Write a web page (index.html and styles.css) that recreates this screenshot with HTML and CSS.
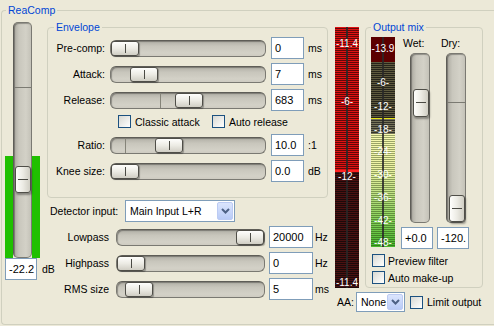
FILE: index.html
```html
<!DOCTYPE html>
<html>
<head>
<meta charset="utf-8">
<title>ReaComp</title>
<link rel="stylesheet" href="styles.css">
</head>
<body>
<div class="group outer">
  <div class="gtitle">ReaComp</div>
  <div class="outer-body">
    <div class="col-thresh">
      <div class="thresh">
        <div class="green"></div>
        <div class="vtrack thresh-track">
          <span class="vtick" style="top:64px"></span>
          <span class="vthumb thresh-thumb" style="top:143px"></span>
        </div>
        <div class="green"></div>
      </div>
      <div class="valrow">
        <div class="tbox thresh-box">-22.2</div>
        <span class="unit thresh-unit">dB</span>
      </div>
    </div>

    <div class="col-main">
      <div class="group env">
        <div class="gtitle">Envelope</div>
        <div class="env-body">
          <div class="erow">
            <span class="lbl">Pre-comp:</span>
            <div class="htrack etrack"><span class="hthumb" style="left:0px"></span></div>
            <div class="tbox ebox">0</div>
            <span class="unit">ms</span>
          </div>
          <div class="erow">
            <span class="lbl">Attack:</span>
            <div class="htrack etrack"><span class="hthumb" style="left:19px"></span></div>
            <div class="tbox ebox">7</div>
            <span class="unit">ms</span>
          </div>
          <div class="erow">
            <span class="lbl">Release:</span>
            <div class="htrack etrack"><span class="htick" style="left:49px"></span><span class="hthumb" style="left:64px"></span></div>
            <div class="tbox ebox">683</div>
            <span class="unit">ms</span>
          </div>
          <div class="cbline">
            <div class="cbitem cbfirst"><span class="cb"></span><span class="cblbl">Classic attack</span></div>
            <div class="cbitem"><span class="cb"></span><span class="cblbl">Auto release</span></div>
          </div>
          <div class="erow">
            <span class="lbl">Ratio:</span>
            <div class="htrack etrack"><span class="htick" style="left:14px"></span><span class="hthumb" style="left:44px"></span></div>
            <div class="tbox ebox">10.0</div>
            <span class="unit">:1</span>
          </div>
          <div class="erow">
            <span class="lbl">Knee size:</span>
            <div class="htrack etrack"><span class="hthumb" style="left:0px"></span></div>
            <div class="tbox ebox">0.0</div>
            <span class="unit">dB</span>
          </div>
        </div>
      </div>

      <div class="det-row">
        <span class="det-lbl">Detector input:</span>
        <div class="combo det-combo">
          <span class="ctext">Main Input L+R</span>
          <span class="cbtn"><svg width="9" height="6" viewBox="0 0 9 6"><path d="M1 1 L4.5 4.5 L8 1" fill="none" stroke="#4d6185" stroke-width="2"/></svg></span>
        </div>
      </div>

      <div class="frow">
        <span class="flbl">Lowpass</span>
        <div class="htrack ftrack"><span class="hthumb" style="left:119px"></span></div>
        <div class="tbox fbox">20000</div>
        <span class="funit">Hz</span>
      </div>
      <div class="frow">
        <span class="flbl">Highpass</span>
        <div class="htrack ftrack"><span class="hthumb" style="left:0px"></span></div>
        <div class="tbox fbox">0</div>
        <span class="funit">Hz</span>
      </div>
      <div class="frow">
        <span class="flbl">RMS size</span>
        <div class="htrack ftrack"><span class="hthumb" style="left:8px"></span></div>
        <div class="tbox fbox">5</div>
        <span class="funit">ms</span>
      </div>
    </div>

    <div class="col-right">
      <div class="right-top">
        <div class="meter meter-in">
          <div class="mi-hot"></div>
          <div class="mi-line"></div>
          <div class="mi-cold"></div>
          <span class="mlabel" style="top:12px">-11.4</span>
          <span class="mlabel" style="top:70px">-6-</span>
          <span class="mlabel" style="top:145px">-12-</span>
          <span class="mlabel" style="top:251px">-11.4</span>
        </div>

        <div class="group outmix">
          <div class="gtitle">Output mix</div>
          <div class="om-body">
            <div class="om-top">
              <div class="meter meter-out">
                <div class="mo-peak"></div>
                <div class="mo-a"></div>
                <div class="mo-yl"></div>
                <div class="mo-b"></div>
                <div class="mo-c"></div>
                <span class="mlabel" style="top:7px">-13.9</span>
                <span class="mlabel" style="top:41px">-6-</span>
                <span class="mlabel" style="top:65px">-12-</span>
                <span class="mlabel" style="top:88px">-18-</span>
                <span class="mlabel" style="top:110px">-24-</span>
                <span class="mlabel" style="top:133px">-30-</span>
                <span class="mlabel" style="top:156px">-36-</span>
                <span class="mlabel" style="top:179px">-42-</span>
                <span class="mlabel" style="top:201px">-48-</span>
              </div>
              <div class="mixcol wet">
                <div class="mixlbl">Wet:</div>
                <div class="vtrack mixtrack"><span class="vthumb mixthumb" style="top:35px;height:28px"></span></div>
                <div class="tbox mixbox">+0.0</div>
              </div>
              <div class="mixcol dry">
                <div class="mixlbl">Dry:</div>
                <div class="vtrack mixtrack"><span class="vtick" style="top:48px"></span><span class="vthumb mixthumb" style="top:141px"></span></div>
                <div class="tbox mixbox">-120.</div>
              </div>
            </div>
            <div class="cbrow"><span class="cb"></span><span class="cblbl">Preview filter</span></div>
            <div class="cbrow"><span class="cb"></span><span class="cblbl">Auto make-up</span></div>
          </div>
        </div>
      </div>

      <div class="aa-row">
        <span class="aalbl">AA:</span>
        <div class="combo aa-combo">
          <span class="ctext">None</span>
          <span class="cbtn"><svg width="9" height="6" viewBox="0 0 9 6"><path d="M1 1 L4.5 4.5 L8 1" fill="none" stroke="#4d6185" stroke-width="2"/></svg></span>
        </div>
        <span class="cb limcb"></span><span class="cblbl">Limit output</span>
      </div>
    </div>
  </div>
</div>
</body>
</html>
```

FILE: styles.css
```css
* { box-sizing: border-box; }
html, body { margin: 0; padding: 0; }
body {
  width: 494px;
  height: 326px;
  overflow: hidden;
  background: #ece9d8;
  font-family: "Liberation Sans", Arial, sans-serif;
  font-size: 10.5px;
  color: #000;
}

/* group boxes */
.group { border: 1px solid #d0d0bf; border-radius: 4px; }
.gtitle {
  width: fit-content;
  height: 13px;
  line-height: 13px;
  padding: 0 2px;
  margin: -7px 0 -6px 0;
  background: #ece9d8;
  color: #0046d5;
  white-space: nowrap;
  position: relative;
}
.outer {
  margin: 10px 0 0 1px;
  width: 493px;
  height: 315px;
  border-right: 0;
  border-top-right-radius: 0;
  border-bottom-right-radius: 0;
}
.outer > .gtitle { margin-left: 4px; }
.outer-body { display: flex; align-items: flex-start; padding: 11px 0 0 3px; }

/* text boxes */
.tbox {
  height: 22px;
  border: 1px solid #7f9db9;
  background: #fff;
  font-size: 11px;
  line-height: 14px;
  padding: 3px 3px 0 3px;
  white-space: nowrap;
  overflow: hidden;
  flex: none;
}
.unit { margin-left: 4px; white-space: nowrap; }

/* horizontal sliders */
.htrack {
  position: relative;
  flex: none;
  height: 17px;
  border: 1px solid #7a7972;
  border-top-color: #5e5d57;
  border-radius: 6px;
  background: linear-gradient(#b0aea5, #c8c6bc 35%, #d3d1c7 80%, #cecbc1);
  box-shadow: inset 1px 1px 1px rgba(0,0,0,.3);
}
.hthumb {
  position: absolute;
  top: 0;
  width: 28px;
  height: 15px;
  border: 1px solid #4f4e48;
  border-radius: 3px;
  background: linear-gradient(#fefefc, #ecebe4 50%, #d0cec4);
  box-shadow: 1px 1px 1px rgba(0,0,0,.3);
}
.hthumb::after {
  content: "";
  position: absolute;
  left: 13px;
  top: 2px;
  bottom: 2px;
  width: 1px;
  background: #4a4a44;
}
.htick { position: absolute; top: 0; bottom: 0; width: 1px; background: #858479; }

/* vertical sliders */
.vtrack {
  position: relative;
  flex: none;
  border: 1px solid #7a7972;
  border-left-color: #5e5d57;
  border-radius: 5px;
  background: linear-gradient(to right, #aba9a0, #c9c7bd 30%, #d3d1c7 70%, #c4c2b8);
  box-shadow: inset 1px 1px 1px rgba(0,0,0,.3);
}
.vthumb {
  position: absolute;
  width: 16px;
  height: 27px;
  border: 1px solid #4f4e48;
  border-radius: 3px;
  background: linear-gradient(to right, #fefefc, #ecebe4 50%, #d0cec4);
  box-shadow: 1px 2px 2px rgba(0,0,0,.35);
}
.vthumb::after {
  content: "";
  position: absolute;
  left: 2px;
  right: 2px;
  top: 12px;
  height: 1px;
  background: #4a4a44;
}
.vtick { position: absolute; left: 0; right: 0; height: 1px; background: #7b7a72; }

/* threshold column */
.col-thresh { width: 42px; flex: none; display: flex; flex-direction: column; }
.thresh { display: flex; align-items: flex-end; height: 236px; }
.green { width: 8px; height: 102px; background: #20c000; }
.thresh-track { width: 19px; height: 236px; }
.thresh-thumb { left: 1px; }
.valrow { display: flex; align-items: center; height: 22px; }
.thresh-box { width: 32px; }
.thresh-unit { margin-left: 5px; }

/* main column */
.col-main { width: 281px; flex: none; margin-top: 5px; }
.env { height: 171px; }
.env > .gtitle { margin-left: 6px; }
.env-body { padding-top: 9px; }
.erow { display: flex; align-items: center; height: 22px; margin-bottom: 4px; }
.lbl { width: 57px; text-align: right; margin-right: 5px; white-space: nowrap; flex: none; }
.etrack { width: 156px; margin-right: 5px; }
.ebox { width: 33px; }
.cbline { display: flex; align-items: center; height: 13px; margin: 2px 0 6px 0; padding-left: 70px; }
.cbitem { display: flex; align-items: center; }
.cbfirst { width: 94px; }
.cb {
  display: inline-block;
  width: 13px;
  height: 13px;
  flex: none;
  border: 1px solid #1c5180;
  background: linear-gradient(135deg, #d8d8d2, #f4f4f2 70%, #fff);
}
.cblbl { margin-left: 4px; white-space: nowrap; }

.det-row { display: flex; align-items: center; height: 22px; margin-top: 2px; padding-left: 3px; }
.det-lbl { width: 75px; white-space: nowrap; flex: none; }
.combo {
  display: flex;
  align-items: stretch;
  border: 1px solid #7f9db9;
  background: #fff;
  padding: 1px;
  flex: none;
}
.ctext { flex: 1; padding-left: 3px; display: flex; align-items: center; white-space: nowrap; }
.cbtn {
  width: 16px;
  flex: none;
  display: flex;
  align-items: center;
  justify-content: center;
  border: 1px solid #bccbf3;
  border-radius: 2px;
  background: linear-gradient(#dbe5fd, #b9cbf7);
}
.det-combo { width: 110px; height: 22px; }

.frow { display: flex; align-items: center; height: 22px; margin-top: 4px; }
.flbl { width: 62px; text-align: right; margin-right: 7px; white-space: nowrap; flex: none; }
.ftrack { width: 149px; margin-right: 4px; }
.fbox { width: 44px; }
.funit { margin-left: 2px; white-space: nowrap; }

/* right column */
.col-right { margin-left: 7px; margin-top: 5px; flex: none; }
.right-top { display: flex; align-items: flex-start; }

.meter { position: relative; display: flex; flex-direction: column; flex: none; overflow: hidden; }
.meter::before {
  content: "";
  position: absolute;
  left: 11px;
  top: 0;
  bottom: 0;
  width: 2px;
  background: rgba(40,40,40,.85);
}
.mlabel {
  position: absolute;
  left: 0;
  right: 0;
  text-align: center;
  color: #fff;
  font-size: 10px;
  line-height: 10px;
  white-space: nowrap;
}
.meter-in { width: 24px; height: 261px; }
.mi-hot { height: 143px; background: repeating-linear-gradient(to bottom, #e01212 0 1px, #620808 1px 2px); }
.mi-line { height: 2px; background: #ff2020; }
.mi-cold { flex: 1; background: repeating-linear-gradient(to bottom, #4a1111 0 1px, #1c0a0a 1px 2px); }

.outmix { width: 118px; height: 261px; margin-left: 6px; flex: none; }
.outmix > .gtitle { margin-left: 5px; }
.om-body { padding: 9px 0 0 5px; }
.om-top { display: flex; align-items: flex-start; }
.meter-out { width: 24px; height: 210px; }
.mo-peak { height: 25px; background: #5c0000; }
.mo-a { height: 56px; background: repeating-linear-gradient(to bottom, #5e5a3e 0 1px, #26241b 1px 2px); }
.mo-yl { height: 1px; background: #e6e418; }
.mo-b { height: 15px; background: repeating-linear-gradient(to bottom, #76745a 0 1px, #34332a 1px 2px); }
.mo-c {
  flex: 1;
  background:
    repeating-linear-gradient(to bottom, rgba(0,0,0,0) 0 1px, rgba(20,40,0,.4) 1px 2px),
    linear-gradient(to bottom, #f6f8b0 0, #eef4a4 30%, #c8e68a 50%, #8ad25c 75%, #48b82e 100%);
}

.mixcol { width: 32px; flex: none; display: flex; flex-direction: column; }
.wet { margin-left: 6px; }
.dry { margin-left: 4px; }
.mixlbl { height: 13px; line-height: 13px; white-space: nowrap; }
.wet .mixlbl { padding-left: 2px; }
.dry .mixlbl { padding-left: 4px; }
.mixtrack { width: 20px; height: 170px; margin: 3px 0 0 9px; }
.mixthumb { left: 2px; }
.mixbox { width: 32px; margin-top: 4px; }

.cbrow { display: flex; align-items: center; height: 17px; padding-left: 1px; }
.om-top + .cbrow { margin-top: 3px; }
.cbrow .cblbl { margin-left: 3px; }

.aa-row { display: flex; align-items: center; height: 20px; margin-top: 4px; padding-left: 2px; }
.aalbl { width: 19px; flex: none; }
.aa-combo { width: 49px; height: 20px; }
.limcb { margin-left: 5px; }
```
